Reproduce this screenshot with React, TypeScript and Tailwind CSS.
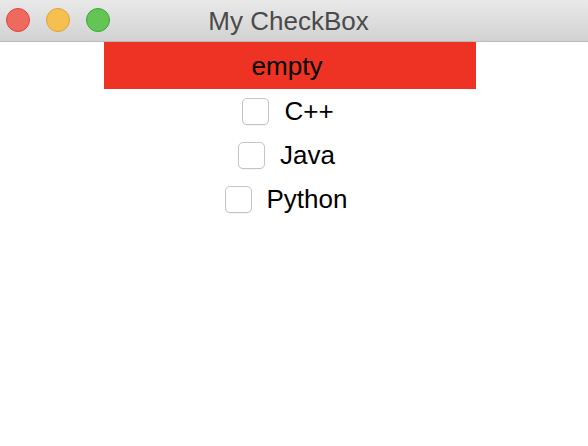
import React from "react";

const font = { fontFamily: '"Liberation Sans", Arial, Helvetica, sans-serif' };

function Row({ label, shift }: { label: string; shift: string }) {
  return (
    <div className={`flex h-[44px] items-center justify-center ${shift}`}>
      <div className="h-[27px] w-[27px] rounded-[5px] border border-[#c4c4c4] bg-white shadow-[0_0.5px_0.5px_rgba(0,0,0,0.08)]" />
      <span className="ml-[15px] text-[26px] leading-none text-black">{label}</span>
    </div>
  );
}

export default function App() {
  return (
    <div className="h-[446px] w-[588px] bg-white" style={font}>
      <div className="relative flex h-[42px] items-center border-b border-[#b9b9b9] bg-gradient-to-b from-[#e9e9e9] to-[#d2d2d2]">
        <div className="flex items-center gap-[16px] pl-[6px] pb-[2px]">
          <div className="h-[24px] w-[24px] rounded-full border border-[#e0443e] bg-[#ee6a5f]" />
          <div className="h-[24px] w-[24px] rounded-full border border-[#dea236] bg-[#f5c04f]" />
          <div className="h-[24px] w-[24px] rounded-full border border-[#3ea73a] bg-[#62c554]" />
        </div>
        <div className="absolute inset-0 flex items-center justify-center pr-[11px]">
          <span className="text-[26px] leading-none text-[#4a4a4a]">My CheckBox</span>
        </div>
      </div>
      <div className="flex justify-center pr-[8px]">
        <div className="flex h-[47px] w-[372px] items-center justify-center bg-[#ee3224] text-[26px] leading-none text-black">
          <span className="pr-[6px]">empty</span>
        </div>
      </div>
      <Row label="C++" shift="pr-[12px]" />
      <Row label="Java" shift="pr-[15px]" />
      <Row label="Python" shift="pr-[16px]" />
    </div>
  );
}
